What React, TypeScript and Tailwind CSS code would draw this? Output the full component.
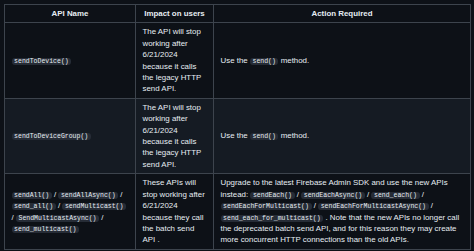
import React from "react";

const C = ({ children }: { children: React.ReactNode }) => (
  <code className="rounded-[3px] bg-[#262c36] px-[2.6px] py-0 text-[6.5px] leading-[8px] text-[#e6edf3] [font-family:'Liberation_Mono','DejaVu_Sans_Mono',monospace]">
    {children}
  </code>
);

const th = "border border-[#3d444d] px-[6.5px] py-[3px] text-center font-bold";
const td = "border border-[#3d444d] px-[6.5px] py-[3px] align-middle";

export default function App() {
  return (
    <div className="h-[251px] w-[474px] overflow-hidden bg-[#0d1117] pl-[4px] pt-[4px] text-[7.9px] leading-[11.4px] text-[#e6edf3] [font-family:'Liberation_Sans',Arial,sans-serif]">
      <table className="w-[466px] table-fixed border-collapse">
        <colgroup>
          <col className="w-[131px]" />
          <col className="w-[78px]" />
          <col className="w-[257px]" />
        </colgroup>
        <thead>
          <tr className="bg-[#0d1117]">
            <th className={th}>API Name</th>
            <th className={th}>Impact on users</th>
            <th className={th}>Action Required</th>
          </tr>
        </thead>
        <tbody>
          <tr className="bg-[#0d1117]">
            <td className={td}>
              <C>sendToDevice()</C>
            </td>
            <td className={td}>
              The API will stop working after 6/21/2024 because it calls the legacy HTTP send API.
            </td>
            <td className={td}>
              Use the <C>send()</C> method.
            </td>
          </tr>
          <tr className="bg-[#151b23]">
            <td className={td}>
              <C>sendToDeviceGroup()</C>
            </td>
            <td className={td}>
              The API will stop working after 6/21/2024 because it calls the legacy HTTP send API.
            </td>
            <td className={td}>
              Use the <C>send()</C> method.
            </td>
          </tr>
          <tr className="bg-[#0d1117]">
            <td className={td}>
              <C>sendAll()</C> / <C>sendAllAsync()</C> / <C>send_all()</C> / <C>sendMulticast()</C>{" "}
              <span className="whitespace-nowrap">
                / <C>SendMulticastAsync()</C>
              </span>{" "}
              / <C>send_multicast()</C>
            </td>
            <td className={td}>
              These APIs will stop working after 6/21/2024 because they call the batch send API .
            </td>
            <td className={td}>
              Upgrade to the latest Firebase Admin SDK and use the new APIs instead: <C>sendEach()</C> /{" "}
              <C>sendEachAsync()</C> / <C>send_each()</C> / <C>sendEachForMulticast()</C> /{" "}
              <C>sendEachForMulticastAsync()</C> / <C>send_each_for_multicast()</C> . Note that the new APIs no
              longer call the deprecated batch send API, and for this reason they may create more concurrent HTTP
              connections than the old APIs.
            </td>
          </tr>
        </tbody>
      </table>
    </div>
  );
}
